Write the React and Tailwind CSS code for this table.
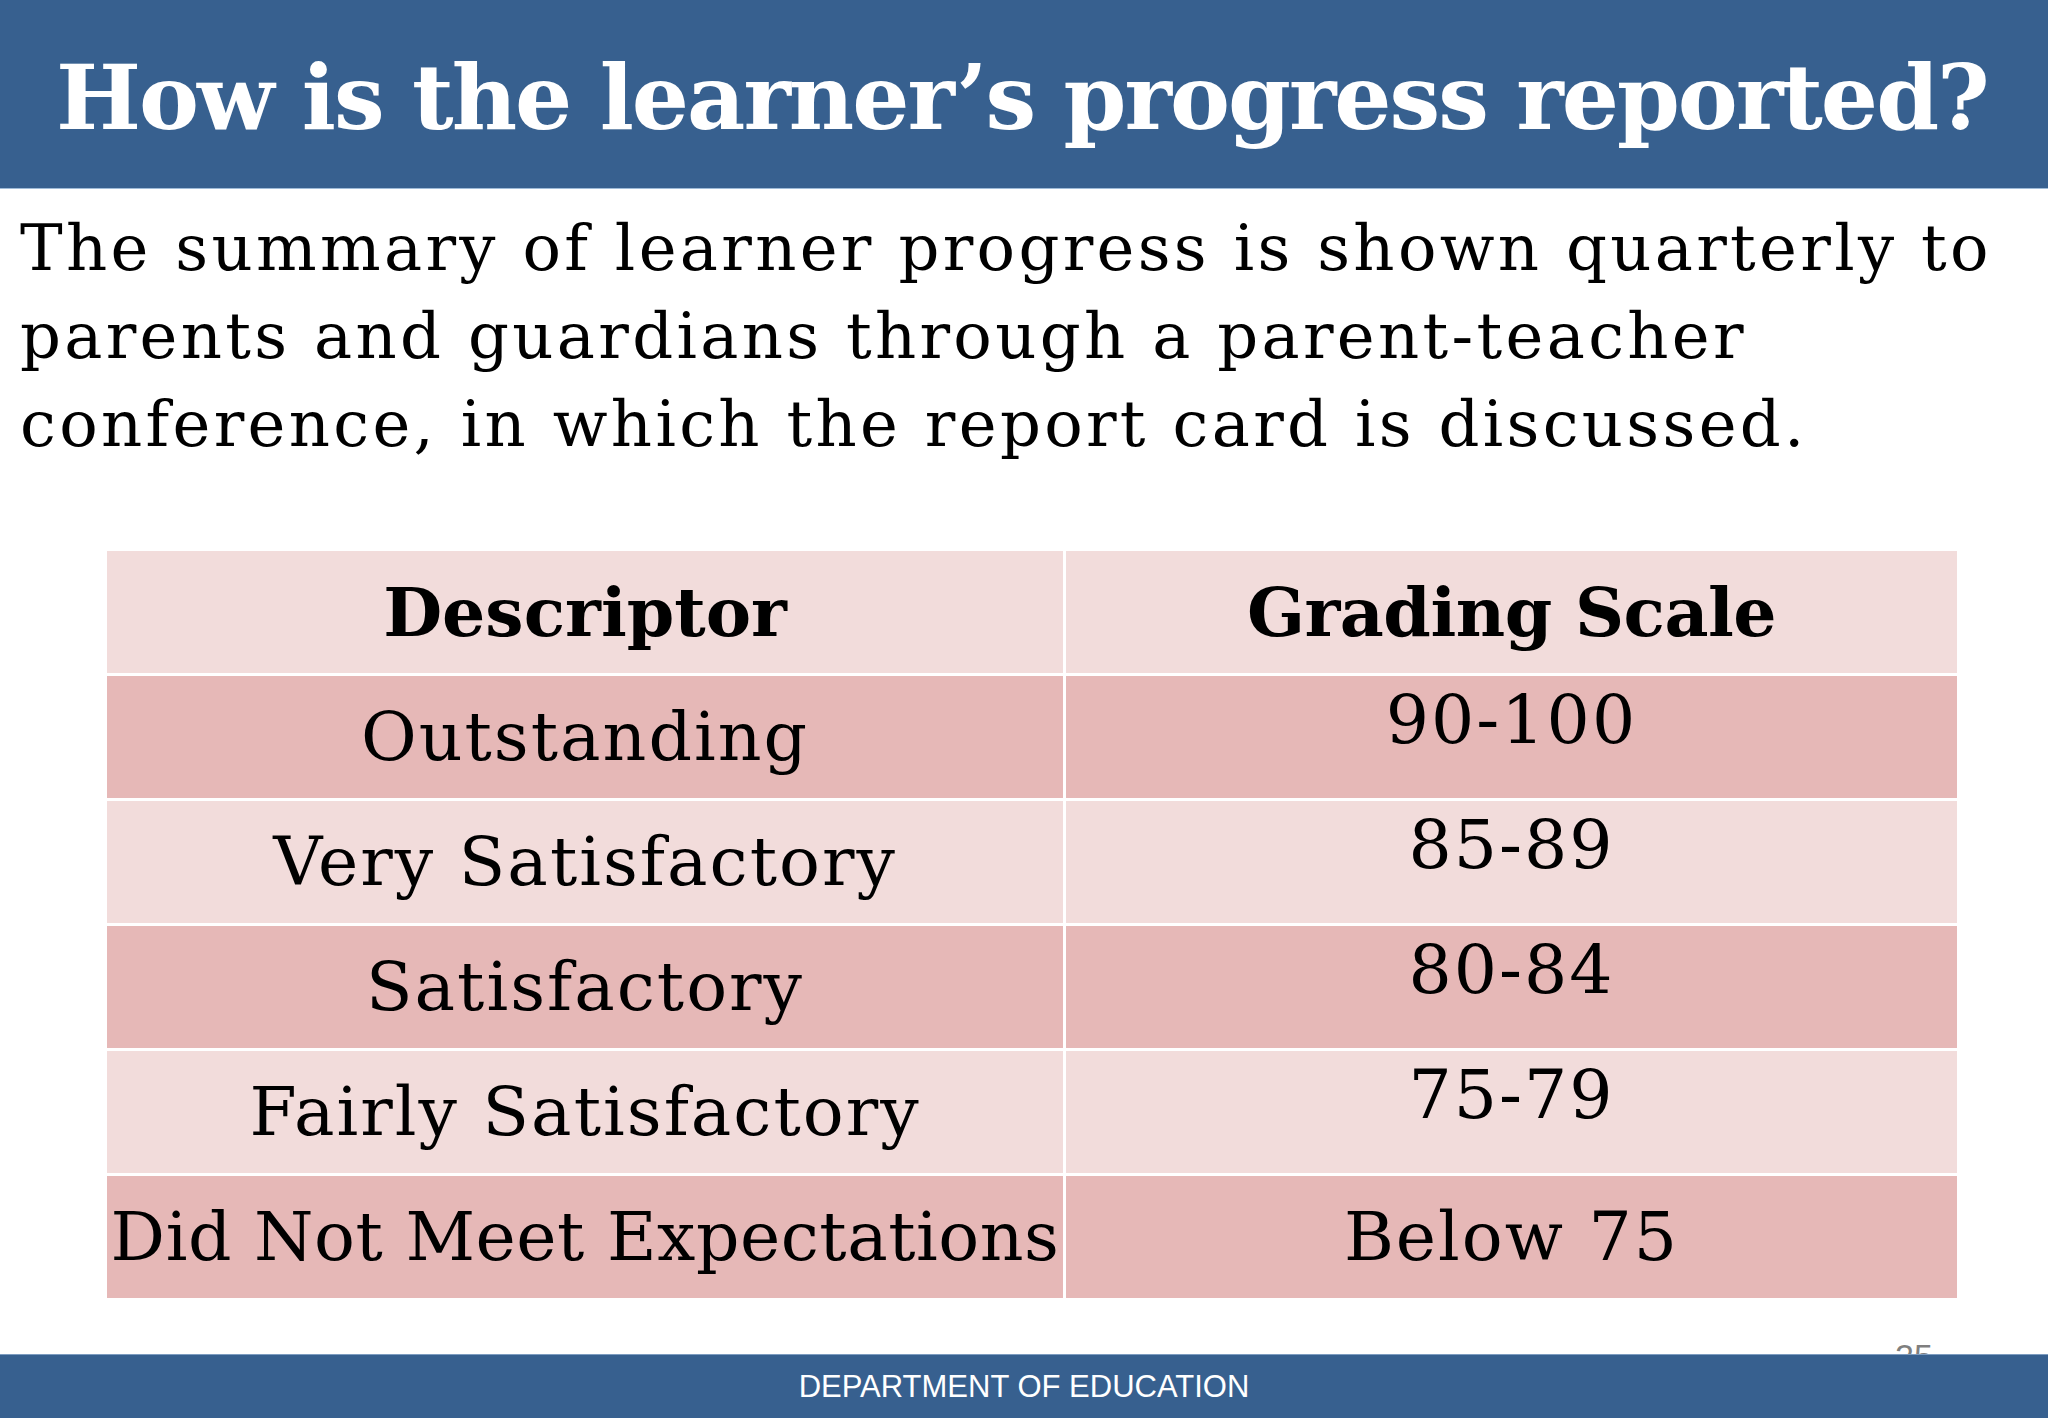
import React from "react";

const rows = [
  { label: "Outstanding", scale: "90-100", dark: true },
  { label: "Very Satisfactory", scale: "85-89", dark: false },
  { label: "Satisfactory", scale: "80-84", dark: true },
  { label: "Fairly Satisfactory", scale: "75-79", dark: false },
  { label: "Did Not Meet Expectations", scale: "Below 75", dark: true, last: true },
];

const App = () => {
  return (
    <div className="w-[2048px] h-[1418px] bg-white flex flex-col overflow-hidden font-['DejaVu_Serif',serif] text-black">
      <div className="h-[189px] shrink-0 bg-[#37608f] border-b border-[#9fbbd8] flex items-center pl-[56px] pt-[6px]">
        <h1 className="text-[90px] leading-none font-bold tracking-[-2px] text-white whitespace-nowrap">
          How is the learner’s progress reported?
        </h1>
      </div>

      <div className="relative flex-1 flex flex-col">
        <p className="mt-[15px] pl-[20px] text-[64px] leading-[88px] tracking-[3.3px] whitespace-nowrap">
          The summary of learner progress is shown quarterly to
          <br />
          parents and guardians through a parent-teacher
          <br />
          conference, in which the report card is discussed.
        </p>

        <div className="mt-[83px] ml-[107px] w-[1850px] grid grid-cols-[956px_891px] gap-[3px] bg-white">
          <div className="h-[122px] bg-[#f2dcdb] flex items-center justify-center text-[68px] font-bold leading-none">
            Descriptor
          </div>
          <div className="h-[122px] bg-[#f2dcdb] flex items-center justify-center text-[68px] font-bold tracking-[-0.5px] leading-none">
            Grading Scale
          </div>
          {rows.map((r) => (
            <React.Fragment key={r.label}>
              <div
                className={
                  "h-[122px] flex items-center justify-center text-[68px] leading-none whitespace-nowrap " +
                  (r.dark ? "bg-[#e6b8b7] " : "bg-[#f2dcdb] ") +
                  (r.last ? "tracking-[0.5px]" : "tracking-[2px]")
                }
              >
                {r.label}
              </div>
              <div
                className={
                  "h-[122px] flex justify-center text-[68px] leading-none tracking-[2px] whitespace-nowrap " +
                  (r.dark ? "bg-[#e6b8b7] " : "bg-[#f2dcdb] ") +
                  (r.last ? "items-center" : "items-start pt-[10px]")
                }
              >
                {r.scale}
              </div>
            </React.Fragment>
          ))}
        </div>

        <span className="absolute left-[1895px] bottom-[-19px] text-[34px] leading-none text-[#7f7f7f] font-['Liberation_Sans',sans-serif]">
          25
        </span>
      </div>

      <div className="relative z-10 h-[64px] shrink-0 bg-[#37608f] border-t border-[#7d9cc0] flex items-center justify-center">
        <span className="text-white text-[31px] leading-none font-['Liberation_Sans',sans-serif]">
          DEPARTMENT OF EDUCATION
        </span>
      </div>
    </div>
  );
};

export default App;
